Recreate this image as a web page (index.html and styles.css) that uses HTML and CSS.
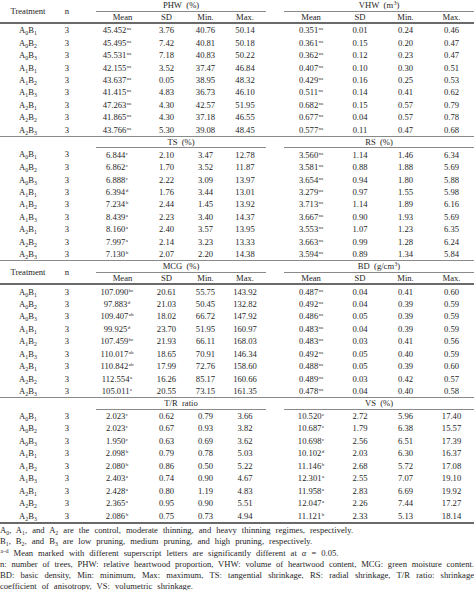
FILE: index.html
```html
<!DOCTYPE html>
<html>
<head>
<meta charset="utf-8">
<link rel="stylesheet" href="styles.css">
</head>
<body>
<table class="tbl">
<colgroup>
<col class="c1"><col class="c2"><col class="c3"><col class="c4"><col class="c5"><col class="c6"><col class="c7"><col class="c8"><col class="c9"><col class="c10"><col class="c11"><col class="c12">
</colgroup>
<tbody>
<tr class="grp">
<td rowspan="2" class="tr-h sub">Treatment</td><td rowspan="2" class="sub">n</td><td rowspan="2" class="sub"></td>
<td colspan="4" class="gl">PHW&nbsp; (%)</td><td rowspan="2" class="sub"></td><td colspan="4" class="gl">VHW&nbsp; (m<sup class="hs">3</sup>)</td>
</tr>
<tr class="subh">
<td class="sub">Mean</td><td class="sub">SD</td><td class="sub">Min.</td><td class="sub mx">Max.</td>
<td class="sub">Mean</td><td class="sub">SD</td><td class="sub">Min.</td><td class="sub">Max.</td>
</tr>
<tr class="d"><td>A<sub>0</sub>B<sub>1</sub></td><td>3</td><td></td><td class="m">45.452<sup>ns</sup></td><td>3.76</td><td>40.76</td><td class="mx">50.14</td><td></td><td>0.351<sup>ns</sup></td><td>0.01</td><td>0.24</td><td>0.46</td></tr>
<tr class="d"><td>A<sub>0</sub>B<sub>2</sub></td><td>3</td><td></td><td class="m">45.495<sup>ns</sup></td><td>7.42</td><td>40.81</td><td class="mx">50.18</td><td></td><td>0.361<sup>ns</sup></td><td>0.15</td><td>0.20</td><td>0.47</td></tr>
<tr class="d"><td>A<sub>0</sub>B<sub>3</sub></td><td>3</td><td></td><td class="m">45.531<sup>ns</sup></td><td>7.18</td><td>40.83</td><td class="mx">50.22</td><td></td><td>0.362<sup>ns</sup></td><td>0.12</td><td>0.23</td><td>0.47</td></tr>
<tr class="d"><td>A<sub>1</sub>B<sub>1</sub></td><td>3</td><td></td><td class="m">42.155<sup>ns</sup></td><td>3.52</td><td>37.47</td><td class="mx">46.84</td><td></td><td>0.407<sup>ns</sup></td><td>0.10</td><td>0.30</td><td>0.51</td></tr>
<tr class="d"><td>A<sub>1</sub>B<sub>2</sub></td><td>3</td><td></td><td class="m">43.637<sup>ns</sup></td><td>0.05</td><td>38.95</td><td class="mx">48.32</td><td></td><td>0.429<sup>ns</sup></td><td>0.16</td><td>0.25</td><td>0.53</td></tr>
<tr class="d"><td>A<sub>1</sub>B<sub>3</sub></td><td>3</td><td></td><td class="m">41.415<sup>ns</sup></td><td>4.83</td><td>36.73</td><td class="mx">46.10</td><td></td><td>0.511<sup>ns</sup></td><td>0.14</td><td>0.41</td><td>0.62</td></tr>
<tr class="d"><td>A<sub>2</sub>B<sub>1</sub></td><td>3</td><td></td><td class="m">47.263<sup>ns</sup></td><td>4.30</td><td>42.57</td><td class="mx">51.95</td><td></td><td>0.682<sup>ns</sup></td><td>0.15</td><td>0.57</td><td>0.79</td></tr>
<tr class="d"><td>A<sub>2</sub>B<sub>2</sub></td><td>3</td><td></td><td class="m">41.865<sup>ns</sup></td><td>4.30</td><td>37.18</td><td class="mx">46.55</td><td></td><td>0.677<sup>ns</sup></td><td>0.04</td><td>0.57</td><td>0.78</td></tr>
<tr class="d"><td>A<sub>2</sub>B<sub>3</sub></td><td>3</td><td></td><td class="m">43.766<sup>ns</sup></td><td>5.30</td><td>39.08</td><td class="mx">48.45</td><td></td><td>0.577<sup>ns</sup></td><td>0.11</td><td>0.47</td><td>0.68</td></tr>

<tr class="sec"><td></td><td></td><td></td><td colspan="4" class="gl">TS&nbsp; (%)</td><td></td><td colspan="4" class="gl">RS&nbsp; (%)</td></tr>
<tr class="d"><td>A<sub>0</sub>B<sub>1</sub></td><td>3</td><td></td><td class="m">6.844<sup>c</sup></td><td>2.10</td><td>3.47</td><td class="mx">12.78</td><td></td><td>3.560<sup>ns</sup></td><td>1.14</td><td>1.46</td><td>6.34</td></tr>
<tr class="d"><td>A<sub>0</sub>B<sub>2</sub></td><td>3</td><td></td><td class="m">6.862<sup>c</sup></td><td>1.70</td><td>3.52</td><td class="mx">11.87</td><td></td><td>3.581<sup>ns</sup></td><td>0.88</td><td>1.88</td><td>5.69</td></tr>
<tr class="d"><td>A<sub>0</sub>B<sub>3</sub></td><td>3</td><td></td><td class="m">6.888<sup>c</sup></td><td>2.22</td><td>3.09</td><td class="mx">13.97</td><td></td><td>3.654<sup>ns</sup></td><td>0.94</td><td>1.80</td><td>5.88</td></tr>
<tr class="d"><td>A<sub>1</sub>B<sub>1</sub></td><td>3</td><td></td><td class="m">6.394<sup>d</sup></td><td>1.76</td><td>3.44</td><td class="mx">13.01</td><td></td><td>3.279<sup>ns</sup></td><td>0.97</td><td>1.55</td><td>5.98</td></tr>
<tr class="d"><td>A<sub>1</sub>B<sub>2</sub></td><td>3</td><td></td><td class="m">7.234<sup>b</sup></td><td>2.44</td><td>1.45</td><td class="mx">13.92</td><td></td><td>3.713<sup>ns</sup></td><td>1.14</td><td>1.89</td><td>6.16</td></tr>
<tr class="d"><td>A<sub>1</sub>B<sub>3</sub></td><td>3</td><td></td><td class="m">8.439<sup>a</sup></td><td>2.23</td><td>3.40</td><td class="mx">14.37</td><td></td><td>3.667<sup>ns</sup></td><td>0.90</td><td>1.93</td><td>5.69</td></tr>
<tr class="d"><td>A<sub>2</sub>B<sub>1</sub></td><td>3</td><td></td><td class="m">8.160<sup>a</sup></td><td>2.40</td><td>3.57</td><td class="mx">13.95</td><td></td><td>3.553<sup>ns</sup></td><td>1.07</td><td>1.23</td><td>6.35</td></tr>
<tr class="d"><td>A<sub>2</sub>B<sub>2</sub></td><td>3</td><td></td><td class="m">7.997<sup>a</sup></td><td>2.14</td><td>3.23</td><td class="mx">13.33</td><td></td><td>3.663<sup>ns</sup></td><td>0.99</td><td>1.28</td><td>6.24</td></tr>
<tr class="d"><td>A<sub>2</sub>B<sub>3</sub></td><td>3</td><td></td><td class="m">7.130<sup>b</sup></td><td>2.07</td><td>2.20</td><td class="mx">14.38</td><td></td><td>3.594<sup>ns</sup></td><td>0.89</td><td>1.34</td><td>5.84</td></tr>

<tr class="grp sec"><td rowspan="2" class="tr-h sub">Treatment</td><td rowspan="2" class="sub">n</td><td rowspan="2" class="sub"></td>
<td colspan="4" class="gl">MCG&nbsp; (%)</td><td rowspan="2" class="sub"></td><td colspan="4" class="gl">BD&nbsp; (g/cm<sup class="hs">3</sup>)</td></tr>
<tr class="subh">
<td class="sub">Mean</td><td class="sub">SD</td><td class="sub">Min.</td><td class="sub mx">Max.</td>
<td class="sub">Mean</td><td class="sub">SD</td><td class="sub">Min.</td><td class="sub">Max.</td>
</tr>
<tr class="d"><td>A<sub>0</sub>B<sub>1</sub></td><td>3</td><td></td><td class="m">107.090<sup>bc</sup></td><td>20.61</td><td>55.75</td><td class="mx">143.92</td><td></td><td>0.487<sup>ns</sup></td><td>0.04</td><td>0.41</td><td>0.60</td></tr>
<tr class="d"><td>A<sub>0</sub>B<sub>2</sub></td><td>3</td><td></td><td class="m">97.883<sup>d</sup></td><td>21.03</td><td>50.45</td><td class="mx">132.82</td><td></td><td>0.492<sup>ns</sup></td><td>0.04</td><td>0.39</td><td>0.59</td></tr>
<tr class="d"><td>A<sub>0</sub>B<sub>3</sub></td><td>3</td><td></td><td class="m">109.407<sup>ab</sup></td><td>18.02</td><td>66.72</td><td class="mx">147.92</td><td></td><td>0.486<sup>ns</sup></td><td>0.05</td><td>0.39</td><td>0.59</td></tr>
<tr class="d"><td>A<sub>1</sub>B<sub>1</sub></td><td>3</td><td></td><td class="m">99.925<sup>d</sup></td><td>23.70</td><td>51.95</td><td class="mx">160.97</td><td></td><td>0.483<sup>ns</sup></td><td>0.04</td><td>0.39</td><td>0.59</td></tr>
<tr class="d"><td>A<sub>1</sub>B<sub>2</sub></td><td>3</td><td></td><td class="m">107.459<sup>bc</sup></td><td>21.93</td><td>66.11</td><td class="mx">168.03</td><td></td><td>0.483<sup>ns</sup></td><td>0.03</td><td>0.41</td><td>0.56</td></tr>
<tr class="d"><td>A<sub>1</sub>B<sub>3</sub></td><td>3</td><td></td><td class="m">110.017<sup>ab</sup></td><td>18.65</td><td>70.91</td><td class="mx">146.34</td><td></td><td>0.492<sup>ns</sup></td><td>0.05</td><td>0.40</td><td>0.59</td></tr>
<tr class="d"><td>A<sub>2</sub>B<sub>1</sub></td><td>3</td><td></td><td class="m">110.842<sup>ab</sup></td><td>17.99</td><td>72.76</td><td class="mx">158.60</td><td></td><td>0.488<sup>ns</sup></td><td>0.05</td><td>0.39</td><td>0.60</td></tr>
<tr class="d"><td>A<sub>2</sub>B<sub>2</sub></td><td>3</td><td></td><td class="m">112.554<sup>a</sup></td><td>16.26</td><td>85.17</td><td class="mx">160.66</td><td></td><td>0.489<sup>ns</sup></td><td>0.03</td><td>0.42</td><td>0.57</td></tr>
<tr class="d"><td>A<sub>2</sub>B<sub>3</sub></td><td>3</td><td></td><td class="m">105.011<sup>c</sup></td><td>20.55</td><td>73.15</td><td class="mx">161.35</td><td></td><td>0.478<sup>ns</sup></td><td>0.04</td><td>0.40</td><td>0.58</td></tr>

<tr class="sec"><td></td><td></td><td></td><td colspan="4" class="gl">T/R&nbsp; ratio</td><td></td><td colspan="4" class="gl">VS&nbsp; (%)</td></tr>
<tr class="d"><td>A<sub>0</sub>B<sub>1</sub></td><td>3</td><td></td><td class="m">2.023<sup>c</sup></td><td>0.62</td><td>0.79</td><td class="mx">3.66</td><td></td><td>10.520<sup>c</sup></td><td>2.72</td><td>5.96</td><td>17.40</td></tr>
<tr class="d"><td>A<sub>0</sub>B<sub>2</sub></td><td>3</td><td></td><td class="m">2.023<sup>c</sup></td><td>0.67</td><td>0.93</td><td class="mx">3.82</td><td></td><td>10.687<sup>c</sup></td><td>1.79</td><td>6.38</td><td>15.57</td></tr>
<tr class="d"><td>A<sub>0</sub>B<sub>3</sub></td><td>3</td><td></td><td class="m">1.950<sup>c</sup></td><td>0.63</td><td>0.69</td><td class="mx">3.62</td><td></td><td>10.698<sup>c</sup></td><td>2.56</td><td>6.51</td><td>17.39</td></tr>
<tr class="d"><td>A<sub>1</sub>B<sub>1</sub></td><td>3</td><td></td><td class="m">2.098<sup>b</sup></td><td>0.79</td><td>0.78</td><td class="mx">5.03</td><td></td><td>10.102<sup>d</sup></td><td>2.03</td><td>6.30</td><td>16.37</td></tr>
<tr class="d"><td>A<sub>1</sub>B<sub>2</sub></td><td>3</td><td></td><td class="m">2.080<sup>b</sup></td><td>0.86</td><td>0.50</td><td class="mx">5.22</td><td></td><td>11.146<sup>b</sup></td><td>2.68</td><td>5.72</td><td>17.08</td></tr>
<tr class="d"><td>A<sub>1</sub>B<sub>3</sub></td><td>3</td><td></td><td class="m">2.403<sup>a</sup></td><td>0.74</td><td>0.90</td><td class="mx">4.67</td><td></td><td>12.301<sup>a</sup></td><td>2.55</td><td>7.07</td><td>19.10</td></tr>
<tr class="d"><td>A<sub>2</sub>B<sub>1</sub></td><td>3</td><td></td><td class="m">2.428<sup>a</sup></td><td>0.80</td><td>1.19</td><td class="mx">4.83</td><td></td><td>11.958<sup>a</sup></td><td>2.83</td><td>6.69</td><td>19.92</td></tr>
<tr class="d"><td>A<sub>2</sub>B<sub>2</sub></td><td>3</td><td></td><td class="m">2.365<sup>a</sup></td><td>0.95</td><td>0.90</td><td class="mx">5.51</td><td></td><td>12.047<sup>a</sup></td><td>2.26</td><td>7.44</td><td>17.27</td></tr>
<tr class="d last"><td>A<sub>2</sub>B<sub>3</sub></td><td>3</td><td></td><td class="m">2.086<sup>b</sup></td><td>0.75</td><td>0.73</td><td class="mx">4.94</td><td></td><td>11.121<sup>b</sup></td><td>2.33</td><td>5.13</td><td>18.14</td></tr>
</tbody>
</table>
<div class="notes">
<div class="ln">A<sub>0</sub>, A<sub>1</sub>, and A<sub>2</sub> are the control, moderate thinning, and heavy thinning regimes, respectively.</div>
<div class="ln">B<sub>1</sub>, B<sub>2</sub>, and B<sub>3</sub> are low pruning, medium pruning, and high pruning, respectively.</div>
<div class="ln"><sup class="ns">a–d</sup> Mean marked with different superscript letters are significantly different at <i>α</i> = 0.05.</div>
<div class="ln just">n: number of trees, PHW: relative heartwood proportion, VHW: volume of heartwood content, MCG: green moisture content.</div>
<div class="ln just">BD: basic density, Min: minimum, Max: maximum, TS: tangential shrinkage, RS: radial shrinkage, T/R ratio: shrinkage</div>
<div class="ln">coefficient of anisotropy, VS: volumetric shrinkage.</div>
</div>
</body>
</html>
```
FILE: styles.css
```css
html, body {
  margin: 0;
  padding: 0;
  background: #ffffff;
}
body {
  width: 474px;
  height: 590px;
  overflow: hidden;
  font-family: "Liberation Serif", "Times New Roman", serif;
  color: #1e1e1e;
}
.tbl {
  width: 474px;
  border-collapse: collapse;
  table-layout: fixed;
  font-size: 8.6px;
}
.c1 { width: 56px; }
.c2 { width: 22px; }
.c3 { width: 18px; }
.c4 { width: 53px; }
.c5 { width: 35px; }
.c6 { width: 43px; }
.c7 { width: 39px; }
.c8 { width: 18px; }
.c9 { width: 54px; }
.c10 { width: 44px; }
.c11 { width: 47px; }
.c12 { width: 45px; }
.tbl td {
  padding: 0;
  text-align: center;
  white-space: nowrap;
  line-height: 10px;
  vertical-align: middle;
}
.tbl tr.d td {
  height: 12.45px;
}
.tbl tr.grp td {
  height: 10.5px;
}
.tbl tr.subh td {
  height: 10.5px;
}
.tbl tr.sec td {
  border-top: 1px solid #8a8a8a;
  height: 10.5px;
}
.tbl td.gl {
  border-bottom: 1px solid #8a8a8a;
  line-height: 9px;
}
.tbl td.sub {
  border-bottom: 2px solid #6a6a6a;
}
.tbl td.m {
  padding-right: 11px;
}
.tbl td.mx {
  padding-right: 3px;
}
.tbl tr.last td {
  border-bottom: 2px solid #6a6a6a;
}
sup {
  font-size: 5px;
  line-height: 0;
  vertical-align: 3px;
  margin-left: 0.5px;
}
sup.hs {
  font-size: 5.5px;
}
sub {
  font-size: 5.8px;
  line-height: 0;
  vertical-align: -1.5px;
}
.notes {
  font-size: 8.6px;
  line-height: 11.2px;
  padding-top: 1.5px;
  word-spacing: 2.9px;
}
.notes .ln {
  white-space: nowrap;
}
.notes .just {
  text-align: justify;
  text-align-last: justify;
  white-space: normal;
  word-spacing: 0;
}
sup.ns {
  font-size: 5.5px;
  vertical-align: 3px;
}
```
